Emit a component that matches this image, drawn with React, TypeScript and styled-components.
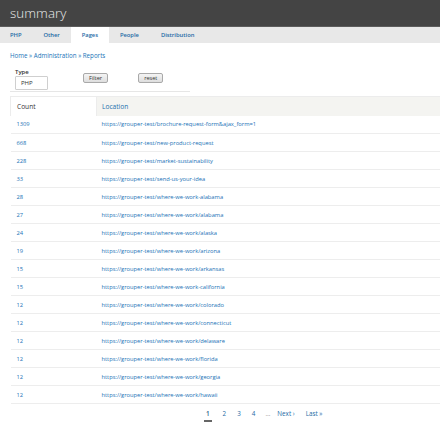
import styled, { createGlobalStyle } from "styled-components";

const GlobalStyle = createGlobalStyle`
    html, body {
        margin: 0;
        padding: 0;
        background: #fff;
        font-family: "Open Sans", "Liberation Sans", sans-serif;
    }
`;

const StyledPage = styled.div`
    width: 440px;
    height: 440px;
    overflow: hidden;
`;

const StyledHeader = styled.header`
    height: 27px;
    background: #444444;
    border-bottom: 1px solid #5c5c5c;
    box-sizing: border-box;
    display: flex;
    align-items: center;
    padding-left: 10px;
`;

const StyledTitle = styled.h1`
    margin: 0 0 1px;
    font-size: 13.3px;
    font-weight: 300;
    color: #ececec;
    letter-spacing: 0.1px;
`;

const StyledTabBar = styled.nav`
    height: 16px;
    background: #e8e8e8;
    display: flex;
`;

const StyledTab = styled.a<{ $active?: boolean }>`
    display: flex;
    align-items: center;
    width: ${(p) => (p.$active ? "38px" : "auto")};
    justify-content: center;
    padding: 0 11px;
    box-sizing: border-box;
    font-size: 5.8px;
    font-weight: 600;
    color: #1d6aa6;
    text-decoration: none;
    background: ${(p) => (p.$active ? "#fff" : "transparent")};
    &:first-child {
        padding-left: 10px;
    }
`;

const StyledContent = styled.main`
    padding: 0 0 0 10px;
`;

const StyledBreadcrumb = styled.div`
    margin-top: 8px;
    font-size: 6.2px;
    color: #1a74b8;
    height: 10px;
    line-height: 10px;
`;

const StyledForm = styled.form`
    display: flex;
    align-items: flex-start;
    margin-top: 5px;
    width: 175px;
    height: 25px;
    padding-left: 5px;
    border-bottom: 1px solid #e6e6e6;
`;

const StyledField = styled.div`
    display: flex;
    flex-direction: column;
`;

const StyledLabel = styled.label`
    font-size: 6px;
    font-weight: 600;
    color: #333;
    line-height: 8px;
    margin-top: 2px;
`;

const StyledSelect = styled.div`
    width: 33px;
    height: 14px;
    box-sizing: border-box;
    border: 1px solid #cfcfcf;
    border-radius: 1px;
    font-size: 6px;
    color: #333;
    padding-left: 5px;
    line-height: 12px;
`;

const StyledButton = styled.button<{ $gap: number }>`
    margin-left: ${(p) => p.$gap}px;
    margin-top: 7px;
    height: 10px;
    padding: 0 5px;
    font-family: inherit;
    font-size: 5.6px;
    line-height: 8px;
    color: #333;
    background: linear-gradient(#f4f4f4, #dedede);
    border: 1px solid #a9a9a9;
    border-radius: 2px;
`;

const StyledTable = styled.table`
    margin-top: 4px;
    width: 520px;
    border-collapse: collapse;
`;

const StyledTh = styled.th<{ $shaded?: boolean }>`
    height: 19px;
    padding: 0 0 0 5px;
    text-align: left;
    font-size: 6.6px;
    font-weight: 400;
    color: ${(p) => (p.$shaded ? "#1b6fae" : "#333")};
    background: ${(p) => (p.$shaded ? "#f4f4f1" : "#fff")};
    border-top: 1px solid #ececec;
    border-left: 1px solid #ececec;
    box-sizing: border-box;
`;

const StyledCountTh = styled(StyledTh)`
    width: 86px;
    padding-left: 6px;
`;

const StyledRow = styled.tr`
    height: 18px;
    border-bottom: 1px solid #ededed;
`;

const StyledTd = styled.td<{ $indent: number }>`
    padding: 0 0 0 ${(p) => p.$indent}px;
    color: #1a72b6;
    font-size: 5.75px;
    white-space: nowrap;
`;

const StyledPager = styled.div`
    display: flex;
    align-items: flex-start;
    margin-top: 6px;
    padding-left: 194px;
    font-size: 6.3px;
    color: #1d6aa6;
`;

const StyledPageLink = styled.span<{ $current?: boolean; $gap: number }>`
    margin-left: ${(p) => p.$gap}px;
    color: ${(p) => (p.$current ? "#2a5c86" : "#1d6aa6")};
    font-weight: ${(p) => (p.$current ? 600 : 400)};
    padding: 0 ${(p) => (p.$current ? "2px" : "0")} 2px;
    border-bottom: 2px solid ${(p) => (p.$current ? "#666" : "transparent")};
    line-height: 8px;
`;

const StyledEllipsis = styled.span<{ $gap: number }>`
    margin-left: ${(p) => p.$gap}px;
    color: #999;
    line-height: 8px;
`;

const rows: [string, string][] = [
    ["1309", "brochure-request-form&ajax_form=1"],
    ["668", "new-product-request"],
    ["228", "market-sustainability"],
    ["33", "send-us-your-idea"],
    ["28", "where-we-work-alabama"],
    ["27", "where-we-work/alabama"],
    ["24", "where-we-work/alaska"],
    ["19", "where-we-work/arizona"],
    ["15", "where-we-work/arkansas"],
    ["15", "where-we-work-california"],
    ["12", "where-we-work/colorado"],
    ["12", "where-we-work/connecticut"],
    ["12", "where-we-work/delaware"],
    ["12", "where-we-work/florida"],
    ["12", "where-we-work/georgia"],
    ["12", "where-we-work/hawaii"],
];

const tabs = ["PHP", "Other", "Pages", "People", "Distribution"];

export default function App() {
    return (
        <StyledPage>
            <GlobalStyle />
            <StyledHeader>
                <StyledTitle>summary</StyledTitle>
            </StyledHeader>
            <StyledTabBar>
                {tabs.map((tab) => (
                    <StyledTab key={tab} $active={tab === "Pages"}>
                        {tab}
                    </StyledTab>
                ))}
            </StyledTabBar>
            <StyledContent>
                <StyledBreadcrumb>Home » Administration » Reports</StyledBreadcrumb>
                <StyledForm>
                    <StyledField>
                        <StyledLabel>Type</StyledLabel>
                        <StyledSelect>PHP</StyledSelect>
                    </StyledField>
                    <StyledButton type="button" $gap={35}>
                        Filter
                    </StyledButton>
                    <StyledButton type="button" $gap={30}>
                        reset
                    </StyledButton>
                </StyledForm>
                <StyledTable>
                    <thead>
                        <tr>
                            <StyledCountTh>Count</StyledCountTh>
                            <StyledTh $shaded>Location</StyledTh>
                        </tr>
                    </thead>
                    <tbody>
                        {rows.map(([count, path], i) => (
                            <StyledRow key={i}>
                                <StyledTd $indent={6}>{count}</StyledTd>
                                <StyledTd $indent={5}>https://grouper-test/{path}</StyledTd>
                            </StyledRow>
                        ))}
                    </tbody>
                </StyledTable>
                <StyledPager>
                    <StyledPageLink $current $gap={0}>
                        1
                    </StyledPageLink>
                    <StyledPageLink $gap={11}>2</StyledPageLink>
                    <StyledPageLink $gap={11}>3</StyledPageLink>
                    <StyledPageLink $gap={11}>4</StyledPageLink>
                    <StyledEllipsis $gap={10}>…</StyledEllipsis>
                    <StyledPageLink $gap={7}>Next ›</StyledPageLink>
                    <StyledPageLink $gap={11}>Last »</StyledPageLink>
                </StyledPager>
            </StyledContent>
        </StyledPage>
    );
}
